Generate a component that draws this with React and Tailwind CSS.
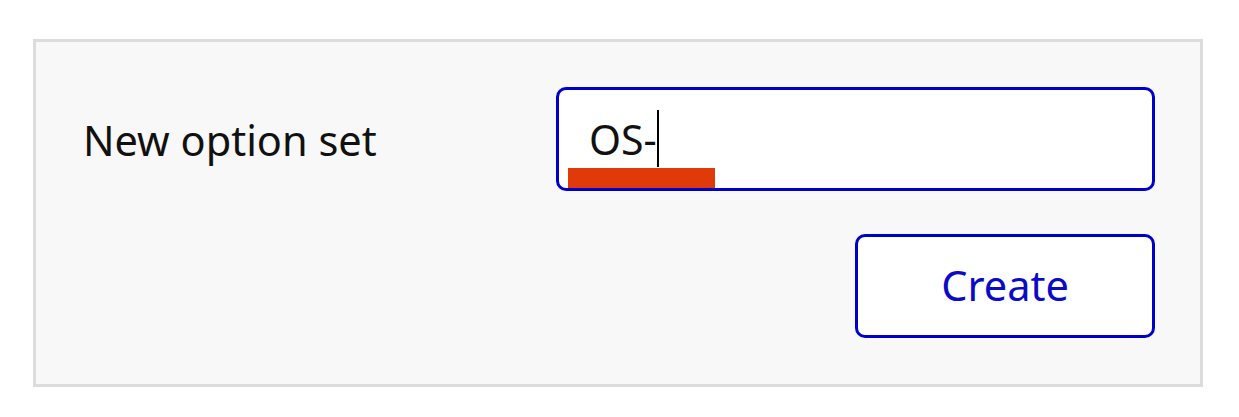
export default function App() {
  return (
    <div className="w-[1239px] h-[417px] bg-white pt-[39px] pl-[33px]" style={{ fontFamily: '"Noto Sans", "Open Sans", sans-serif' }}>
      <div className="w-[1170px] h-[348px] border-[3px] border-[#dcdcdc] bg-[#f8f8f8] pl-[47px] pr-[45px] pt-[45px] flex flex-col gap-[43px]">
        <div className="flex items-center justify-between">
          <span className="text-[41.5px] text-[#111] leading-none mt-[4px]">New option set</span>
          <div className="relative w-[599px] h-[104px] border-[3px] border-[#0000cc] rounded-[10px] bg-white flex items-center pl-[30px]">
            <span className="text-[41px] text-[#111] leading-none">OS-</span>
            <span className="inline-block w-[2px] h-[57px] bg-black -mt-[2px]"></span>
            <div className="absolute left-[9px] bottom-0 w-[147px] h-[20px] bg-[#e03a0a]"></div>
          </div>
        </div>
        <div className="flex justify-end">
          <button className="w-[300px] h-[104px] border-[3px] border-[#0000cc] rounded-[10px] bg-white text-[41.5px] text-[#0a0ac8] leading-none">
            Create
          </button>
        </div>
      </div>
    </div>
  );
}
